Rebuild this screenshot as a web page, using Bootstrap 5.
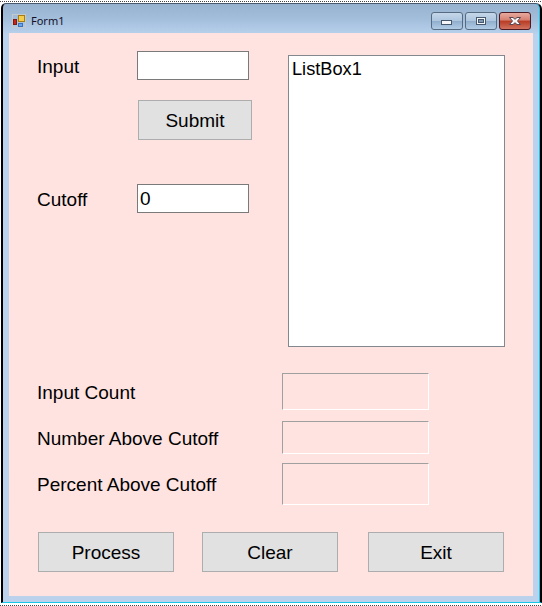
<!DOCTYPE html>
<html lang="en">
<head>
<meta charset="utf-8">
<title>Form1</title>
<link href="https://cdn.jsdelivr.net/npm/bootstrap@5.3.0/dist/css/bootstrap.min.css" rel="stylesheet">
<style>
html,body{margin:0;background:#fff;height:606px;overflow:hidden}
body{font-family:"Liberation Sans",Arial,sans-serif;font-size:19px;line-height:20px;color:#000}
.desk{width:542px;height:606px;padding-top:1px}
.dotline{height:1px;background:repeating-linear-gradient(90deg,#444 0 1px,#fff 1px 2px)}
.winframe{width:541px;height:600px;margin:1px 0 2px 1px;border:1px solid #000;border-left-width:2px;border-right-width:2px;border-top-color:#4a5a6c;border-bottom-color:#18c6e8;border-radius:5px 6px 0 0;box-shadow:inset -1px 0 #18c6e8;background:linear-gradient(180deg,#97b2cf 0,#a4bfdc 16px,#b9d2ee 31px,#bcd2ec 100%);padding:0 7px 6px 6px}
.titlerow{height:29px;padding-top:5px}
.apptitle{font-family:"Noto Sans","Open Sans",sans-serif;font-size:11px;color:#14102a;margin-left:5px}
.appicon{margin-left:3px}
.capbtns{gap:2px;margin-right:2px}
.capbtn{display:block;width:32px;height:18px}
.formarea{width:524px;height:563px;background:#ffe3e0;padding:18px 0 0 28px}
.fieldlabel{width:100px;flex:none;padding-top:2px}
.inputlabel{padding-top:3px}
.entrybox{width:112px;height:29px;background:#fff;border:1px solid #7a7a7a;padding:0 2px;font-size:19px;line-height:27px;border-radius:0;outline:0;display:block;font-family:inherit;color:#000}
.greybtn{background:#e1e1e1;border:1px solid #adadad;border-radius:0;padding:1px 0 0;width:136px;height:40px;font-size:19px;line-height:20px;color:#000;font-family:inherit}
.greybtn:hover,.greybtn:active{background:#e1e1e1;border-color:#adadad;color:#000}
.submitbtn{width:114px;margin:20px 0 0 101px;display:block}
.cutoffrow{margin-top:44px}
.leftpane{width:251px;flex:none}
.listpane{width:217px;height:292px;margin-top:4px;background:#fff;border:1px solid #828790;padding:3px;line-height:21px;font-size:18.2px}
.statsblock{margin-top:26px}
.statlabel{width:245px;flex:none;padding-top:2px}
.statbox{width:147px;border:1px solid #fff;border-top:1px solid #a0a0a0;border-left:1px solid #a0a0a0;flex:none}
.sb1{height:37px}
.sb2{height:33px}
.sb3{height:42px}
.rowb{margin-top:11px}
.rowc{margin-top:9px}
.cmdrow{margin-top:27px;margin-left:1px}
.g1{margin-left:28px}
.g2{margin-left:30px}
</style>
</head>
<body>
<div class="desk">
  <div class="dotline"></div>
  <div class="winframe">
    <div class="titlerow d-flex align-items-center">
      <svg class="appicon" width="14" height="14" viewBox="0 0 14 14" aria-hidden="true">
        <rect x="0.5" y="0.5" width="13" height="13" fill="none" stroke="#c4c9cf" stroke-width="1"/>
        <rect x="1.5" y="5.500" width="3" height="5" fill="#c8241c" stroke="#7d1a14" stroke-width="1"/>
        <rect x="6.500" y="1.500" width="6" height="6" fill="#f5cd4c" stroke="#a87d10" stroke-width="1"/>
        <rect x="6.500" y="9.500" width="4" height="3" fill="#6aa6ee" stroke="#3c70b8" stroke-width="1"/>
      </svg>
      <span class="apptitle">Form1</span>
      <div class="d-flex capbtns ms-auto">
        <svg class="capbtn" viewBox="0 0 32 18" aria-hidden="true">
          <defs>
            <linearGradient id="gb" x1="0" y1="0" x2="0" y2="1"><stop offset="0" stop-color="#c6d8ea"/><stop offset=".48" stop-color="#aec6de"/><stop offset=".5" stop-color="#8fadcb"/><stop offset="1" stop-color="#b4cee8"/></linearGradient>
            <linearGradient id="gr" x1="0" y1="0" x2="0" y2="1"><stop offset="0" stop-color="#e8aca2"/><stop offset=".45" stop-color="#d57f70"/><stop offset=".5" stop-color="#b93a22"/><stop offset="1" stop-color="#d27562"/></linearGradient>
          </defs>
          <rect x=".5" y=".5" width="31" height="17" rx="2.5" fill="url(#gb)" stroke="#566a80"/>
          <rect x="10.500" y="8.500" width="10" height="4" fill="#f4f6f8" stroke="#46586e"/>
        </svg>
        <svg class="capbtn" viewBox="0 0 32 18" aria-hidden="true">
          <rect x=".5" y=".5" width="31" height="17" rx="2.500" fill="url(#gb)" stroke="#566a80"/>
          <rect x="11.500" y="5.500" width="9" height="7" fill="#f4f6f8" stroke="#46586e"/>
          <rect x="13.500" y="7.500" width="5" height="3" fill="#7f98b4" stroke="#46586e"/>
        </svg>
        <svg class="capbtn" viewBox="0 0 32 18" aria-hidden="true">
          <rect x=".5" y=".5" width="31" height="17" rx="2.500" fill="url(#gr)" stroke="#4a1a24"/>
          <path d="M10.500 5.500h3.500l2 1.800 2-1.800h3.500l-3 3.500 3 3.500h-3.500l-2-1.800-2 1.800h-3.500l3-3.500z" fill="#f6f6f6" stroke="#5a4650" stroke-width="1"/>
        </svg>
      </div>
    </div>
    <div class="formarea">
      <div class="d-flex">
        <div class="leftpane">
          <div class="d-flex align-items-center">
            <span class="fieldlabel inputlabel">Input</span>
            <input class="entrybox" type="text" aria-label="Input">
          </div>
          <button type="button" class="btn greybtn submitbtn">Submit</button>
          <div class="d-flex align-items-center cutoffrow">
            <span class="fieldlabel">Cutoff</span>
            <input class="entrybox" type="text" value="0" aria-label="Cutoff">
          </div>
        </div>
        <div class="listpane">ListBox1</div>
      </div>
      <div class="statsblock">
        <div class="d-flex align-items-center"><span class="statlabel">Input Count</span><div class="statbox sb1"></div></div>
        <div class="d-flex align-items-center rowb"><span class="statlabel">Number Above Cutoff</span><div class="statbox sb2"></div></div>
        <div class="d-flex align-items-center rowc"><span class="statlabel">Percent Above Cutoff</span><div class="statbox sb3"></div></div>
      </div>
      <div class="d-flex cmdrow">
        <button type="button" class="btn greybtn">Process</button>
        <button type="button" class="btn greybtn g1">Clear</button>
        <button type="button" class="btn greybtn g2">Exit</button>
      </div>
    </div>
  </div>
  <div class="dotline"></div>
</div>
</body>
</html>
